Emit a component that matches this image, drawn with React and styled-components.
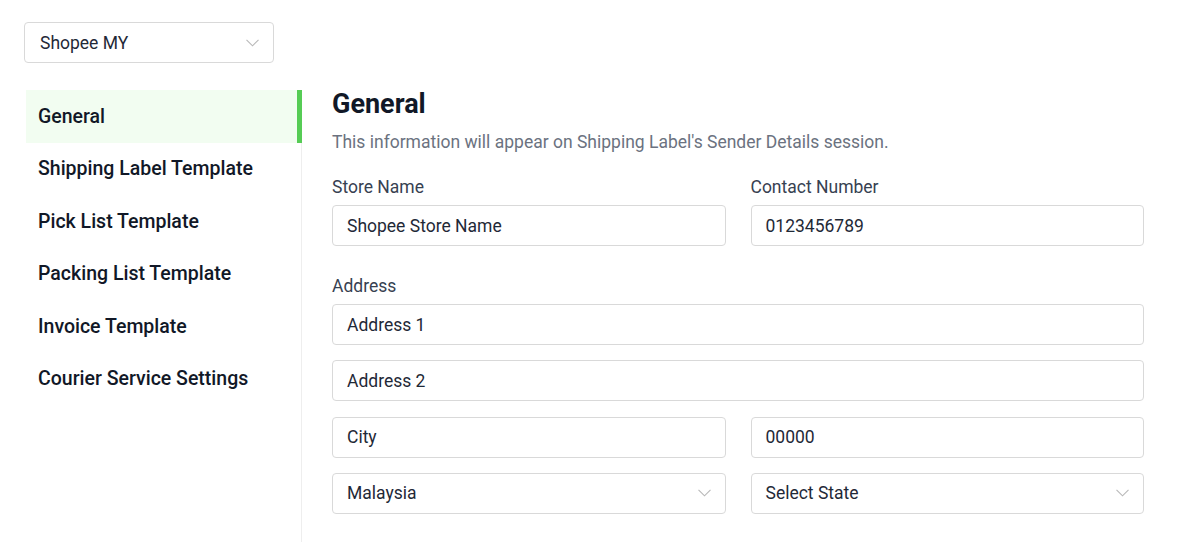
import React, { useState } from 'react';
import styled, { createGlobalStyle } from 'styled-components';

const GlobalStyle = createGlobalStyle`
  * { box-sizing: border-box; }
  body {
    margin: 0;
    background: #fff;
    font-family: Roboto, "Liberation Sans", Arial, sans-serif;
    color: #111827;
  }
`;

const Page = styled.div`
  width: 1179px;
  height: 542px;
  overflow: hidden;
  padding: 22px 0 0 24px;
`;

const ShopSelect = styled.div`
  position: relative;
  width: 250px;
  height: 41px;
  border: 1px solid #d9d9d9;
  border-radius: 4px;
  display: flex;
  align-items: center;
  padding: 0 15px;
  font-size: 17.5px;
  color: #1f2937;
`;

const Layout = styled.div`
  display: flex;
  margin-top: 27px;
`;

const Sidebar = styled.nav`
  width: 278px;
  flex-shrink: 0;
  border-right: 1px solid #eeeeee;
  min-height: 460px;
  padding-left: 2px;
`;

const NavItem = styled.div`
  height: 52.5px;
  display: flex;
  align-items: center;
  padding-left: 12px;
  font-size: 19.5px;
  font-weight: 500;
  color: #111827;
  background: ${p => (p.$active ? '#f2fdf1' : 'transparent')};
  border-right: 5px solid ${p => (p.$active ? '#56cc55' : 'transparent')};
  margin-right: -1px;
  cursor: pointer;
`;

const Main = styled.section`
  flex: 1;
  padding: 0 35px 0 30px;
`;

const Title = styled.h1`
  margin: 0;
  font-size: 27px;
  font-weight: 700;
  color: #111827;
  line-height: 28px;
`;

const Subtitle = styled.p`
  margin: 13px 0 0;
  font-size: 17.5px;
  color: #6b7280;
  line-height: 22px;
`;

const Row = styled.div`
  display: grid;
  grid-template-columns: 1fr 1fr;
  column-gap: 25px;
  margin-top: ${p => p.$top || 0}px;
`;

const Field = styled.div`
  display: flex;
  flex-direction: column;
`;

const Label = styled.label`
  font-size: 17.5px;
  color: #374151;
  line-height: 22px;
  margin-bottom: 7px;
`;

const Stack = styled.div`
  display: flex;
  flex-direction: column;
  gap: 15.3px;
  margin-top: ${p => p.$top || 0}px;
`;

const Input = styled.div`
  position: relative;
  height: 41px;
  border: 1px solid #d9d9d9;
  border-radius: 4px;
  display: flex;
  align-items: center;
  padding: 0 14px;
  font-size: 17.5px;
  color: #1f2937;
`;

const Chevron = styled.svg`
  position: absolute;
  right: 14px;
  top: 50%;
  transform: translateY(-50%);
`;

const Arrow = () => (
  <Chevron width="13" height="8" viewBox="0 0 13 8" fill="none">
    <path d="M0.5 0.8l6 6 6-6" stroke="#b8b8b8" strokeWidth="1.1" />
  </Chevron>
);

const navItems = [
  'General',
  'Shipping Label Template',
  'Pick List Template',
  'Packing List Template',
  'Invoice Template',
  'Courier Service Settings',
];

export default function App() {
  const [active, setActive] = useState(0);
  return (
    <Page>
      <GlobalStyle />
      <ShopSelect>
        Shopee MY
        <Arrow />
      </ShopSelect>
      <Layout>
        <Sidebar>
          {navItems.map((item, i) => (
            <NavItem key={item} $active={i === active} onClick={() => setActive(i)}>
              {item}
            </NavItem>
          ))}
        </Sidebar>
        <Main>
          <Title>General</Title>
          <Subtitle>This information will appear on Shipping Label's Sender Details session.</Subtitle>
          <Row $top={23}>
            <Field>
              <Label>Store Name</Label>
              <Input>Shopee Store Name</Input>
            </Field>
            <Field>
              <Label>Contact Number</Label>
              <Input>0123456789</Input>
            </Field>
          </Row>
          <Stack $top={29}>
            <Field>
              <Label>Address</Label>
              <Input>Address 1</Input>
            </Field>
            <Input>Address 2</Input>
            <Row>
              <Input>City</Input>
              <Input>00000</Input>
            </Row>
            <Row>
              <Input>Malaysia<Arrow /></Input>
              <Input>Select State<Arrow /></Input>
            </Row>
          </Stack>
        </Main>
      </Layout>
    </Page>
  );
}
